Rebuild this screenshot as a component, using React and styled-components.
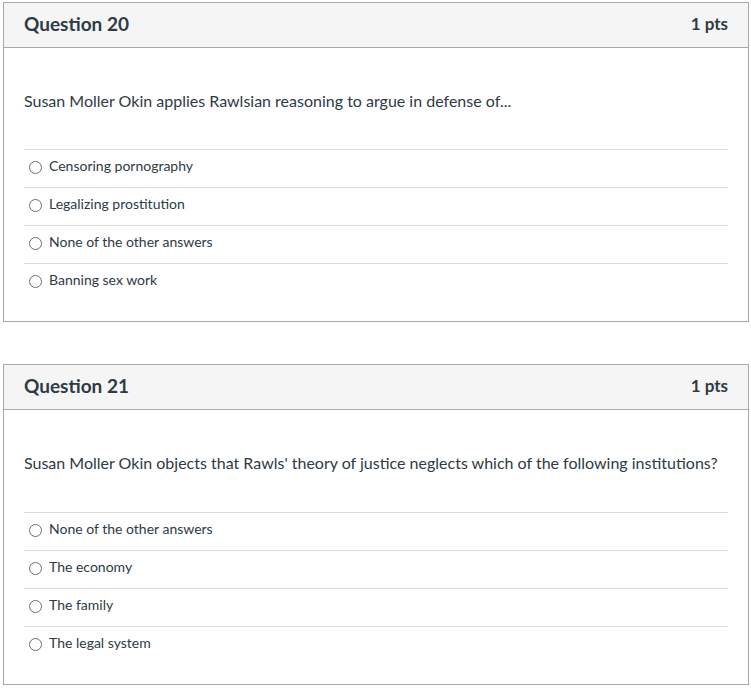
import React from "react";
import styled, { createGlobalStyle } from "styled-components";

const GlobalStyle = createGlobalStyle`
  body {
    margin: 0;
    font-family: Lato, "Noto Sans", sans-serif;
    color: #2d3b45;
    background: #fff;
  }
`;

const Page = styled.div`
  padding: 2px 2px 0 3px;
  display: flex;
  flex-direction: column;
  gap: 42px;
`;

const Card = styled.div`
  width: 746px;
  box-sizing: border-box;
  border: 1px solid #a9a9a9;
  background: #fff;
`;

const Header = styled.div`
  height: 45px;
  display: flex;
  align-items: center;
  justify-content: space-between;
  padding: 0 20px 4px;
  box-sizing: border-box;
  background: #f5f5f5;
  border-bottom: 1px solid #a9a9a9;
`;

const Title = styled.h2`
  margin: 0;
  font-size: 19px;
  font-weight: 700;
  color: #2d3b45;
`;

const Points = styled.span`
  font-size: 17px;
  font-weight: 700;
  color: #2d3b45;
`;

const Body = styled.div`
  padding: 42px 20px 20px;
`;

const Prompt = styled.p`
  margin: 0 0 ${(p) => p.$gap}px;
  font-size: 16px;
  line-height: 22px;
`;

const AnswerList = styled.div`
  display: flex;
  flex-direction: column;
`;

const Answer = styled.label`
  height: 38px;
  display: flex;
  align-items: center;
  gap: 7px;
  padding: 0 0 6px 5px;
  border-top: 1px solid #dcdcdc;
  box-sizing: border-box;
  font-size: 14px;
  color: #2d3b45;
`;

const Radio = styled.span`
  width: 13px;
  height: 13px;
  margin-top: 4px;
  box-sizing: border-box;
  border-radius: 50%;
  border: 1px solid #6d6d6d;
  background: #fff;
  flex-shrink: 0;
`;

const questions = [
  {
    title: "Question 20",
    text: "Susan Moller Okin applies Rawlsian reasoning to argue in defense of...",
    gap: 37,
    answers: [
      "Censoring pornography",
      "Legalizing prostitution",
      "None of the other answers",
      "Banning sex work",
    ],
  },
  {
    title: "Question 21",
    text: "Susan Moller Okin objects that Rawls' theory of justice neglects which of the following institutions?",
    gap: 38,
    answers: [
      "None of the other answers",
      "The economy",
      "The family",
      "The legal system",
    ],
  },
];

export default function App() {
  return (
    <>
      <GlobalStyle />
      <Page>
        {questions.map((q) => (
          <Card key={q.title}>
            <Header>
              <Title>{q.title}</Title>
              <Points>1 pts</Points>
            </Header>
            <Body>
              <Prompt $gap={q.gap}>{q.text}</Prompt>
              <AnswerList>
                {q.answers.map((a) => (
                  <Answer key={a}>
                    <Radio />
                    {a}
                  </Answer>
                ))}
              </AnswerList>
            </Body>
          </Card>
        ))}
      </Page>
    </>
  );
}
